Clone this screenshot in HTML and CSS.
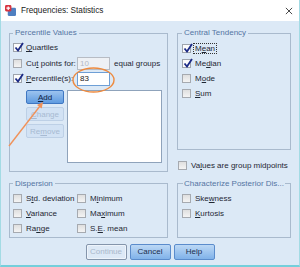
FILE: index.html
```html
<!DOCTYPE html>
<html lang="en">

<head>
  <meta charset="UTF-8" />
  <title>Frequencies: Statistics</title>
  <link rel="stylesheet" href="styles.css">
</head>

<body>
  <div class="dialog">
    <!-- Title bar -->
    <div class="titlebar">
      <svg class="app-icon" viewBox="0 0 12 12">
        <rect x="3" y="3" width="9" height="9" rx="1.5" fill="#4f7fc0" />
        <rect x="0" y="0" width="7" height="7" rx="1.5" fill="#d8343f" />
        <path d="M3.5 1.5v4M1.5 3.5h4" stroke="#fff" stroke-width="1.3" />
      </svg>
      <span class="title">Frequencies: Statistics</span>
      <svg class="close" viewBox="0 0 9 9">
        <path d="M1 1L8 8M8 1L1 8" stroke="#333" stroke-width="1" />
      </svg>
    </div>

    <div class="content">
      <div class="top">
        <!-- Percentile values -->
        <fieldset class="group percentile">
          <legend>Percentile Values</legend>
          <label class="check row-p">
            <span class="box on"><svg viewBox="0 0 10 10"><path d="M1.5 5.5L4 8.5L9 1" fill="none" stroke="#1b2a86" stroke-width="1.8" /></svg></span>
            <span><u>Q</u>uartiles</span>
          </label>
          <label class="check row-p">
            <span class="box"></span>
            <span class="field-label">Cu<u>t</u> points for:</span>
            <span class="input disabled">10</span>
            <span class="after">equal groups</span>
          </label>
          <label class="check row-p">
            <span class="box on"><svg viewBox="0 0 10 10"><path d="M1.5 5.5L4 8.5L9 1" fill="none" stroke="#1b2a86" stroke-width="1.8" /></svg></span>
            <span class="field-label"><u>P</u>ercentile(s):</span>
            <span class="input active">83</span>
          </label>
          <div class="list-area">
            <div class="list-buttons">
              <button class="btn small primary"><u>A</u>dd</button>
              <button class="btn small off"><u>C</u>hange</button>
              <button class="btn small off">Re<u>m</u>ove</button>
            </div>
            <div class="listbox"></div>
          </div>
        </fieldset>

        <div class="right-col">
          <!-- Central tendency -->
          <fieldset class="group central">
            <legend>Central Tendency</legend>
            <label class="check">
              <span class="box on"><svg viewBox="0 0 10 10"><path d="M1.5 5.5L4 8.5L9 1" fill="none" stroke="#1b2a86" stroke-width="1.8" /></svg></span>
              <span class="focus">M<u>e</u>an</span>
            </label>
            <label class="check">
              <span class="box on"><svg viewBox="0 0 10 10"><path d="M1.5 5.5L4 8.5L9 1" fill="none" stroke="#1b2a86" stroke-width="1.8" /></svg></span>
              <span>Me<u>d</u>ian</span>
            </label>
            <label class="check">
              <span class="box"></span>
              <span>M<u>o</u>de</span>
            </label>
            <label class="check">
              <span class="box"></span>
              <span><u>S</u>um</span>
            </label>
          </fieldset>
          <label class="check midpoints">
            <span class="box"></span>
            <span>Va<u>l</u>ues are group midpoints</span>
          </label>
        </div>
      </div>

      <div class="bottom">
        <!-- Dispersion -->
        <fieldset class="group dispersion">
          <legend>Dispersion</legend>
          <div class="grid">
            <label class="check"><span class="box"></span><span>S<u>t</u>d. deviation</span></label>
            <label class="check"><span class="box"></span><span>M<u>i</u>nimum</span></label>
            <label class="check"><span class="box"></span><span><u>V</u>ariance</span></label>
            <label class="check"><span class="box"></span><span>Ma<u>x</u>imum</span></label>
            <label class="check"><span class="box"></span><span>Ra<u>n</u>ge</span></label>
            <label class="check"><span class="box"></span><span>S.<u>E</u>. mean</span></label>
          </div>
        </fieldset>

        <!-- Posterior distribution -->
        <fieldset class="group posterior">
          <legend>Characterize Posterior Dis...</legend>
          <label class="check"><span class="box"></span><span>Ske<u>w</u>ness</span></label>
          <label class="check"><span class="box"></span><span><u>K</u>urtosis</span></label>
        </fieldset>
      </div>

      <div class="actions">
        <button class="btn wide continue">Continue</button>
        <button class="btn wide">Cancel</button>
        <button class="btn wide">Help</button>
      </div>
    </div>

    <!-- Annotation drawn over the dialog -->
    <svg class="annotation" viewBox="0 0 300 267">
      <ellipse cx="93.5" cy="80" rx="20.5" ry="12" fill="none" stroke="#ee8a3e" stroke-width="1.4" />
      <path d="M9 146L40 106" stroke="#f0925a" stroke-width="1.4" />
      <path d="M43 102L41.7 108.6L37 104.9Z" fill="#f0925a" />
    </svg>
  </div>
</body>

</html>
```

FILE: styles.css
```css
/* --- Base --- */
* {
  box-sizing: border-box;
}

body {
  margin: 0;
  font-family: "Liberation Sans", Arial, sans-serif;
  font-size: 8px;
  color: #1f2733;
}

u {
  text-decoration: underline;
}

/* --- Dialog frame --- */
.dialog {
  position: relative;
  width: 300px;
  height: 267px;
  background: #dce9f6;
  border-left: 1px solid #a3dbe4;
  border-right: 1px solid #a3dbe4;
  border-bottom: 2px solid #74cfdb;
}

.titlebar {
  height: 21px;
  background: #ffffff;
  display: flex;
  align-items: center;
  padding: 0 6px 0 4px;
}

.app-icon {
  width: 11px;
  height: 11px;
  margin-right: 5px;
}

.title {
  flex: 1;
  color: #1a1a1a;
  font-size: 8.2px;
}

.close {
  width: 8px;
  height: 8px;
}

.content {
  padding: 7px 8px 0;
}

/* --- Layout --- */
.top,
.bottom {
  display: flex;
  gap: 9px;
}

.bottom {
  margin-top: 6px;
}

.right-col {
  width: 114px;
}

/* --- Group boxes --- */
.group {
  margin: 0;
  padding: 2px 3px 0;
  border: 1px solid #a9bacd;
  min-width: 0;
}

.group legend {
  padding: 0 2px;
  line-height: 10px;
  color: #5475a3;
  white-space: nowrap;
}

.percentile {
  width: 159px;
  height: 144px;
}

.central {
  width: 114px;
  height: 122px;
  padding: 3px 4px 0;
}

.dispersion {
  width: 159px;
  height: 59px;
}

.posterior {
  width: 114px;
  height: 59px;
  padding: 2px 4px 0;
}

.posterior legend {
  padding: 0 1px;
  margin-left: 1px;
}

/* --- Checkboxes --- */
.check {
  display: flex;
  align-items: center;
  gap: 4px;
  height: 15px;
  white-space: nowrap;
}

.row-p {
  height: 15.5px;
}

.box {
  position: relative;
  flex: none;
  width: 9px;
  height: 9px;
  border: 1px solid #a6aab0;
  background: linear-gradient(#dfdfdf, #f4f4f4);
}

.box.on {
  background: #fbfbfb;
  border-color: #9ea4ad;
}

.box svg {
  position: absolute;
  left: 0;
  top: -2px;
  width: 10px;
  height: 10px;
}

.focus {
  outline: 1px dotted #333;
  outline-offset: 0;
  padding: 0 1px;
  margin-left: -1px;
}

.midpoints {
  margin-top: 7.5px;
  padding-left: 1px;
}

/* --- Text fields --- */
.field-label {
  width: 47px;
}

.input {
  width: 33px;
  height: 13px;
  line-height: 11px;
  padding-left: 2px;
  border: 1px solid #b7bcc4;
}

.input.disabled {
  background: #eef1f5;
  color: #b3bac4;
}

.input.active {
  height: 14px;
  line-height: 12px;
  background: #ffffff;
  border-color: #6e9fd6;
  color: #1a1a1a;
}

/* --- List and its buttons --- */
.list-area {
  display: flex;
  gap: 3px;
  margin: 3px 0 0 13px;
}

.list-buttons {
  display: flex;
  flex-direction: column;
  gap: 3px;
  padding-top: 0.5px;
}

.listbox {
  width: 95px;
  height: 73px;
  background: #ffffff;
  border: 1px solid #8fa3bb;
}

/* --- Buttons --- */
.btn {
  font-family: inherit;
  font-size: 8px;
  padding: 0;
  border-radius: 2px;
  border: 1px solid #5b8ccc;
  background: linear-gradient(#bcd8f5, #80b2e9);
  color: #1b2d4d;
}

.btn.small {
  width: 38px;
  height: 14px;
}

.btn.primary {
  border-color: #3f77c2;
  background: linear-gradient(#9cc3ef, #5f9be0);
  color: #10213f;
}

.btn.off {
  border-color: #bdd0e6;
  background: #d2e2f4;
  color: #a7bad2;
}

.btn.wide {
  width: 41px;
  height: 16px;
}

.btn.continue {
  border-color: #8495ab;
  background: #dde9f6;
  color: #a9b8cb;
  box-shadow: inset 0 0 0 1px #eef4fb;
}

.actions {
  display: flex;
  justify-content: center;
  gap: 3px;
  margin-top: 6px;
}

/* --- Grid for dispersion --- */
.grid {
  display: grid;
  grid-template-columns: 64px auto;
}

/* --- Annotation --- */
.annotation {
  position: absolute;
  left: -1px;
  top: 0;
  width: 300px;
  height: 267px;
  pointer-events: none;
}
```
